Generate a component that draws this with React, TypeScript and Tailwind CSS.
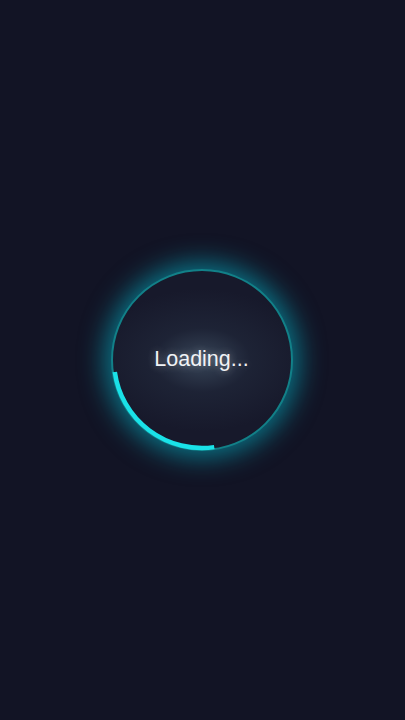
import React from "react";

export default function App() {
  const r = 88;
  const c = 2 * Math.PI * r;
  const arcLen = c * (90 / 360);
  return (
    <div className="w-[405px] h-[720px] bg-[#121425] flex items-center justify-center">
      <div className="relative w-[182px] h-[182px] -mt-[1px] -ml-[2px] rounded-full border-2 border-[#128088] bg-[#17192b] shadow-[0_0_26px_6px_rgba(0,215,235,0.5)] flex items-center justify-center">
        <div className="absolute inset-0 rounded-full bg-[radial-gradient(ellipse_60%_40%_at_center,rgba(100,130,150,0.42)_0%,rgba(55,75,95,0.2)_45%,rgba(23,24,42,0)_100%)]" />
        <svg className="absolute -inset-[2px]" width="182" height="182" viewBox="0 0 182 182">
          <circle
            cx="91"
            cy="91"
            r={r}
            fill="none"
            stroke="#1ae2e8"
            strokeWidth="4.5"
            strokeLinecap="butt"
            strokeDasharray={`${arcLen} ${c}`}
            transform="rotate(82 91 91)"
          />
        </svg>
        <span className="relative text-[21.5px] text-[#f0f2f5] [font-family:'Liberation_Sans',Arial,sans-serif] [text-shadow:0_0_8px_rgba(255,255,255,0.4)]">
          Loading...
        </span>
      </div>
    </div>
  );
}
